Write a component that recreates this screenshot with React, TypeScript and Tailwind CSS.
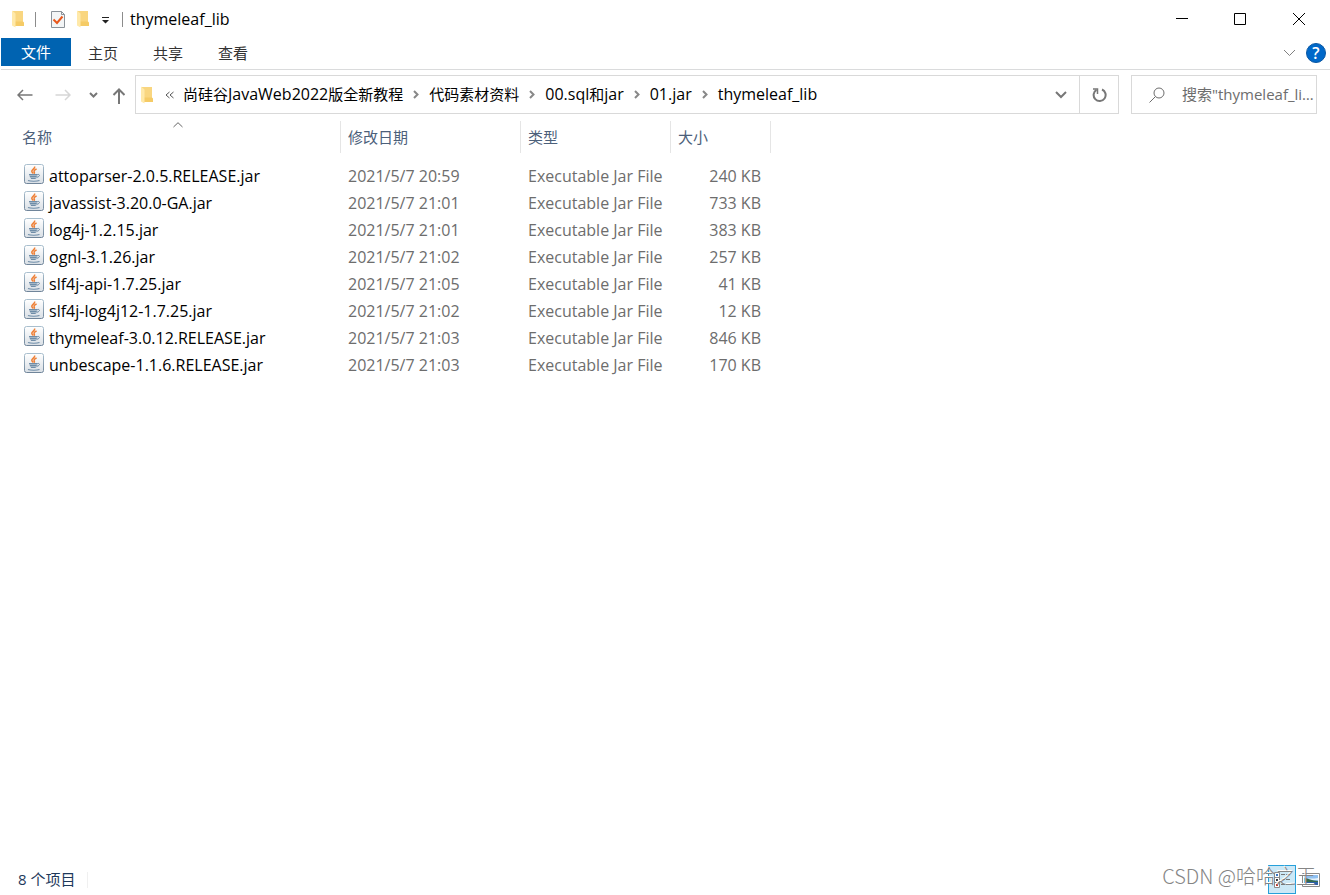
import type { ReactNode } from 'react'

interface JarFile {
  name: string
  modified: string
  size: string
}

const files: JarFile[] = [
  { name: 'attoparser-2.0.5.RELEASE.jar', modified: '2021/5/7 20:59', size: '240 KB' },
  { name: 'javassist-3.20.0-GA.jar', modified: '2021/5/7 21:01', size: '733 KB' },
  { name: 'log4j-1.2.15.jar', modified: '2021/5/7 21:01', size: '383 KB' },
  { name: 'ognl-3.1.26.jar', modified: '2021/5/7 21:02', size: '257 KB' },
  { name: 'slf4j-api-1.7.25.jar', modified: '2021/5/7 21:05', size: '41 KB' },
  { name: 'slf4j-log4j12-1.7.25.jar', modified: '2021/5/7 21:02', size: '12 KB' },
  { name: 'thymeleaf-3.0.12.RELEASE.jar', modified: '2021/5/7 21:03', size: '846 KB' },
  { name: 'unbescape-1.1.6.RELEASE.jar', modified: '2021/5/7 21:03', size: '170 KB' },
]

const crumbs = ['尚硅谷JavaWeb2022版全新教程', '代码素材资料', '00.sql和jar', '01.jar', 'thymeleaf_lib']

// Chinese runs are set one pixel smaller than the Latin text around them
function MixedText({ text }: { text: string }) {
  return text
    .split(/([\u4e00-\u9fff]+)/)
    .filter(Boolean)
    .map((run, i) => (
      <span key={i} className={/[\u4e00-\u9fff]/.test(run) ? 'text-[15px]' : 'text-[16px]'}>
        {run}
      </span>
    ))
}

function FolderIcon() {
  return (
    <svg width="12" height="18" viewBox="0 0 12 18" className="shrink-0">
      <path d="M1 1h10v10.500l1 1V16H2z" fill="#f5cb66" />
      <path d="M1 1h10v10.500H3z" fill="#f9d680" />
      <path d="M0 .5l3.500 3V17.500L0 15.500z" fill="#ffe9a9" />
    </svg>
  )
}

function PropertiesIcon() {
  return (
    <svg width="16" height="19" viewBox="0 0 16 19" fill="none">
      <path d="M1.500 1.500h10l3 3v13h-13z" fill="#f3f5f6" stroke="#8b9299" />
      <path d="M11.500 1.500v3h3" stroke="#8b9299" />
      <path d="M3.500 9.500l3.500 3.500 5.500-6.500" stroke="#e8571c" strokeWidth="2" />
    </svg>
  )
}

function Chevron({ d, width, height, className }: { d: string; width: number; height: number; className: string }) {
  return (
    <svg width={width} height={height} viewBox={`0 0 ${width} ${height}`} fill="none" stroke="currentColor" className={className}>
      <path d={d} />
    </svg>
  )
}

function JarIcon() {
  return (
    <svg width="20" height="20" viewBox="0 0 20 20" fill="none" className="mb-[3px] shrink-0">
      <defs>
        <linearGradient id="jarFace" x1="0" y1="0" x2="0" y2="1">
          <stop offset="0" stopColor="#ffffff" />
          <stop offset="1" stopColor="#d9dfe5" />
        </linearGradient>
        <linearGradient id="jarEdge" x1="0" y1="0" x2="0" y2="1">
          <stop offset="0" stopColor="#a9bfce" />
          <stop offset="1" stopColor="#70859a" />
        </linearGradient>
      </defs>
      <rect x="0.5" y="0.5" width="19" height="19" rx="2" fill="url(#jarFace)" stroke="url(#jarEdge)" />
      <path d="M10.600 2.500c1 2-3.400 3-2.800 5 .2.8 1 1.200 1.200 2M12.600 5c-1.800.7-3 1.700-2.400 2.800.4.7.4 1.200-.2 1.800" stroke="#ee7f35" strokeWidth="1.500" />
      <path d="M5 10.500h8.500c0 2.500-1 4.500-2.500 4.500H8c-1.500 0-2.500-2-3-4.500z" fill="#a3b6c6" />
      <path d="M5 10.500h8.500M6 12.500h6.500M7 14.500h4.500" stroke="#6f8da8" />
      <path d="M13.500 10.500c2.800-.6 2.600 2.200-.6 2.800" stroke="#6f8da8" />
      <path d="M4 16.500c2.500 1 9 1 11.500 0" stroke="#6f8da8" strokeWidth="1.200" />
    </svg>
  )
}

function IconButton({ label, className, children }: { label: string; className?: string; children: ReactNode }) {
  return (
    <button type="button" aria-label={label} className={`flex items-center justify-center shrink-0 ${className ?? ''}`}>
      {children}
    </button>
  )
}

function TitleBar() {
  return (
    <header className="flex h-[38px] items-center">
      <div className="flex flex-1 items-center pl-3">
        <FolderIcon />
        <span className="ml-[11px] h-[15px] w-px bg-[#8c8c8c]" />
        <IconButton label="属性" className="ml-[14px]">
          <PropertiesIcon />
        </IconButton>
        <IconButton label="新建文件夹" className="ml-[11px]">
          <FolderIcon />
        </IconButton>
        <IconButton label="自定义快速访问工具栏" className="ml-[13px] pt-0.5">
          <svg width="7" height="7" viewBox="0 0 7 7">
            <path d="M0 0h7v1H0zM0 3h7L3.500 6.500z" fill="#222" />
          </svg>
        </IconButton>
        <span className="ml-[13px] h-[15px] w-px bg-[#8c8c8c]" />
        <h1 className="ml-[7px] text-[16px] leading-5">thymeleaf_lib</h1>
      </div>
      <IconButton label="最小化" className="h-full w-[58px]">
        <svg width="12" height="12" viewBox="0 0 12 12" stroke="#000">
          <path d="M0 5.500h12" />
        </svg>
      </IconButton>
      <IconButton label="最大化" className="h-full w-[58px]">
        <svg width="12" height="12" viewBox="0 0 12 12" fill="none" stroke="#000">
          <path d="M.5.5h11v11H.5z" />
        </svg>
      </IconButton>
      <IconButton label="关闭" className="h-full w-[61px] pr-px">
        <svg width="12" height="12" viewBox="0 0 12 12" stroke="#000">
          <path d="M0 0l12 12M12 0L0 12" />
        </svg>
      </IconButton>
    </header>
  )
}

function Ribbon() {
  return (
    <nav className="ml-px flex h-8 items-start border-b border-[#dadbdc]">
      <button type="button" className="h-7 w-[70px] bg-[#0063b1] text-white">
        文件
      </button>
      {['主页', '共享', '查看'].map(tab => (
        <button key={tab} type="button" className="h-[30px] w-[65px] pr-px text-[#333]">
          {tab}
        </button>
      ))}
      <div className="ml-auto flex h-[30px] items-center gap-[10px] pr-1">
        <IconButton label="展开功能区">
          <Chevron d="M1 1l5.500 5.500L12 1" width={13} height={8} className="text-[#808080]" />
        </IconButton>
        <IconButton label="帮助" className="size-5 rounded-full border border-[#0a57a3] bg-[#0068c9] text-base font-semibold text-white">
          ?
        </IconButton>
      </div>
    </nav>
  )
}

function AddressRow() {
  return (
    <div className="flex h-[50px] items-center pb-px pr-[13px]">
      <IconButton label="后退" className="ml-[17px]">
        <svg width="16" height="12" viewBox="0 0 16 12" fill="none" stroke="#777" strokeWidth="1.500">
          <path d="M15.500 6H1M6 1L1 6l5 5" />
        </svg>
      </IconButton>
      <IconButton label="前进" className="ml-[22px]">
        <svg width="16" height="12" viewBox="0 0 16 12" fill="none" stroke="#d6d6d6" strokeWidth="1.500">
          <path d="M.5 6H15M10 1l5 5-5 5" />
        </svg>
      </IconButton>
      <IconButton label="最近浏览的位置" className="ml-[18px]">
        <Chevron d="M1 1l3.500 3.500L8 1" width={9} height={6} className="stroke-2 text-[#777]" />
      </IconButton>
      <IconButton label="上移" className="ml-[14px] pt-0.5">
        <svg width="13" height="16" viewBox="0 0 13 16" fill="none" stroke="#777" strokeWidth="2">
          <path d="M7 16V2M1.500 7L7 1.500 12.500 7" />
        </svg>
      </IconButton>

      <div className="ml-[10px] flex h-[39px] flex-1 items-center border border-[#d9d9d9]">
        <span className="ml-[5px]">
          <FolderIcon />
        </span>
        <Chevron d="M4.500 1L1 4l3.500 3M8.500 1L5 4l3.500 3" width={9} height={8} className="ml-3 text-[#555]" />
        <ol className="ml-[9px] flex items-center pb-px">
          {crumbs.map((crumb, i) => (
            <li key={crumb} className="flex items-center">
              {i > 0 && <Chevron d="M1 1l3.500 3.500L1 8" width={6} height={9} className="mx-[10px] stroke-2 text-[#888]" />}
              <button type="button">
                <MixedText text={crumb} />
              </button>
            </li>
          ))}
        </ol>
        <IconButton label="以前的位置" className="ml-auto h-full w-[37px]">
          <Chevron d="M1 1l5 5 5-5" width={12} height={8} className="stroke-2 text-[#777]" />
        </IconButton>
        <IconButton label="刷新" className="h-full w-[39px] border-l border-[#d9d9d9]">
          <svg width="16" height="16" viewBox="0 0 16 16" fill="none" stroke="#777" strokeWidth="2">
            <path d="M11 2.500a6 6 0 1 1-5.500.4" />
            <path d="M2 2h4.500v5" strokeWidth="1.500" />
          </svg>
        </IconButton>
      </div>

      <label className="ml-3 flex h-[39px] w-[186px] items-center border border-[#d9d9d9]">
        <svg width="16" height="16" viewBox="0 0 16 16" fill="none" stroke="#6d6d6d" className="ml-[17px] shrink-0">
          <circle cx="10" cy="6" r="5" />
          <path d="M6.500 9.500L.5 15.500" />
        </svg>
        <input
          type="text"
          aria-label="搜索"
          placeholder={'搜索"thymeleaf_lib"'}
          className="ml-[17px] w-full min-w-0 text-ellipsis bg-transparent pb-0.5 outline-none placeholder:text-[#6d6d6d]"
        />
      </label>
    </div>
  )
}

function FileTable() {
  return (
    <table className="w-[771px] table-fixed border-separate border-spacing-0 text-left">
      <colgroup>
        <col className="w-[341px]" />
        <col className="w-[180px]" />
        <col className="w-[150px]" />
        <col className="w-[100px]" />
      </colgroup>
      <thead className="text-[#4c607a]">
        <tr className="h-8">
          <th className="relative border-r border-[#e5e5e5] pl-[22px] font-normal" aria-sort="ascending">
            名称
            <span className="absolute left-[173px] top-px">
              <Chevron d="M.5 5L5 .7 9.500 5" width={10} height={6} className="text-[#666]" />
            </span>
          </th>
          <th className="border-r border-[#e5e5e5] pl-[7px] font-normal">修改日期</th>
          <th className="border-r border-[#e5e5e5] pl-[7px] font-normal">类型</th>
          <th className="border-r border-[#e5e5e5] pl-[7px] font-normal">大小</th>
        </tr>
      </thead>
      <tbody className="text-[16px] text-[#6d6d6d]">
        <tr className="h-[9px]" aria-hidden="true" />
        {files.map(file => (
          <tr key={file.name} className="h-[27px]">
            <td className="pl-6 text-black">
              <span className="flex items-center gap-[5px]">
                <JarIcon />
                {file.name}
              </span>
            </td>
            <td className="pl-[7px]">{file.modified}</td>
            <td className="pl-[7px]">Executable Jar File</td>
            <td className="pr-[10px] text-right">{file.size}</td>
          </tr>
        ))}
      </tbody>
    </table>
  )
}

function StatusBar() {
  return (
    <footer className="relative flex h-[30px] items-center pb-px pl-[18px] pr-[10px] text-[#1e395b]">
      <span className="pb-0.5">8 个项目</span>
      <span className="ml-3 h-4 w-px bg-[#f0f0f0]" />
      <div className="ml-auto flex items-center">
        <IconButton label="详细信息" className="h-[29px] w-7 border border-[#26a0da] bg-[#cce8f6]">
          <svg width="17" height="16" viewBox="0 0 17 16" fill="none">
            <path d="M.5.5h5v15h-5zM.5 5.500h5M.5 10.500h5" fill="#fff" stroke="#8a8a8a" />
            <path d="M2 2h2v2H2z" fill="#3b78c4" />
            <path d="M2 7h2v2H2z" fill="#333" />
            <path d="M2 12h2v2H2z" fill="#c0392b" />
            <path d="M7 2.500h4M12 2.500h4M7 7.500h4M12 7.500h4M7 12.500h4M12 12.500h4" stroke="#777" />
          </svg>
        </IconButton>
        <IconButton label="大缩略图" className="h-[29px] w-6 justify-end">
          <svg width="18" height="14" viewBox="0 0 18 14">
            <path d="M.5.5h17v13H.5z" fill="#fff" stroke="#8a8a8a" />
            <path d="M2 2h14v10H2z" fill="#8fc0f0" />
            <path d="M5 6c3-1 6 0 11-1v2H5z" fill="#e4f1fb" />
            <path d="M2 5c4 0 8 3 14 3v2H2z" fill="#356a4d" />
            <path d="M2 9h14v3H2z" fill="#2d62a8" />
          </svg>
        </IconButton>
      </div>
      <span className="pointer-events-none absolute bottom-[5px] right-[14px] font-['Noto_Sans_CJK_SC',sans-serif] text-[20px] font-light leading-7 text-[#858585] text-shadow-[-1px_-1px_0_#ffffff]">
        CSDN @哈哈之王
      </span>
    </footer>
  )
}

export default function App() {
  return (
    <div className="flex min-h-screen flex-col bg-white font-['Open_Sans','Noto_Sans_CJK_SC',sans-serif] text-[15px] leading-6 text-black">
      <TitleBar />
      <Ribbon />
      <AddressRow />
      <main className="flex-1 pt-px">
        <FileTable />
      </main>
      <StatusBar />
    </div>
  )
}
